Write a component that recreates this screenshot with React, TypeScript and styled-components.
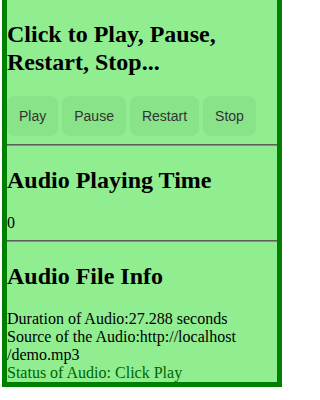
import * as React from 'react';
import styled, {createGlobalStyle} from 'styled-components';

const GlobalStyle = createGlobalStyle`
  body {
    margin: 0;
    background: #fff;
    font-family: 'Liberation Serif', 'Times New Roman', serif;
  }
`;

const controls = ['Play', 'Pause', 'Restart', 'Stop'];

export default function App(): JSX.Element {
  const [status, setStatus] = React.useState('Click Play');

  return (
    <>
      <GlobalStyle />
      <Player>
        <Heading>Click to Play, Pause, Restart, Stop...</Heading>
        <Controls>
          {controls.map(label => (
            <ControlButton key={label} onClick={() => setStatus(label)}>
              {label}
            </ControlButton>
          ))}
        </Controls>
        <Divider />
        <Heading>Audio Playing Time</Heading>
        <Line>0</Line>
        <Divider />
        <Heading>Audio File Info</Heading>
        <Line>Duration of Audio:27.288 seconds</Line>
        <Line>Source of the Audio:http://localhost /demo.mp3</Line>
        <Status>Status of Audio: {status}</Status>
      </Player>
    </>
  );
}

const Player = styled.div`
  display: flow-root;
  width: 270px;
  margin-left: 2px;
  background: #90ee90;
  border: 5px solid #008000;
  border-top: none;
  font-size: 16px;
  color: #000;
`;

const Heading = styled.h2`
  margin: 20px 0;
  font-size: 24px;
  font-weight: bold;
  line-height: 28px;
`;

const Controls = styled.div`
  display: flex;
  gap: 4px;
`;

const ControlButton = styled.button`
  padding: 12px;
  border: none;
  border-radius: 8px;
  background: #89e389;
  color: #333;
  font-family: 'Liberation Sans', Arial, sans-serif;
  font-size: 14px;
  line-height: 16px;
  cursor: pointer;
`;

const Divider = styled.hr`
  margin: 8px 0;
  border: none;
  border-top: 1px solid #5f5f5f;
  border-bottom: 1px solid #8a8a8a;
`;

const Line = styled.div`
  line-height: 18px;
`;

const Status = styled(Line)`
  color: #006400;
`;
